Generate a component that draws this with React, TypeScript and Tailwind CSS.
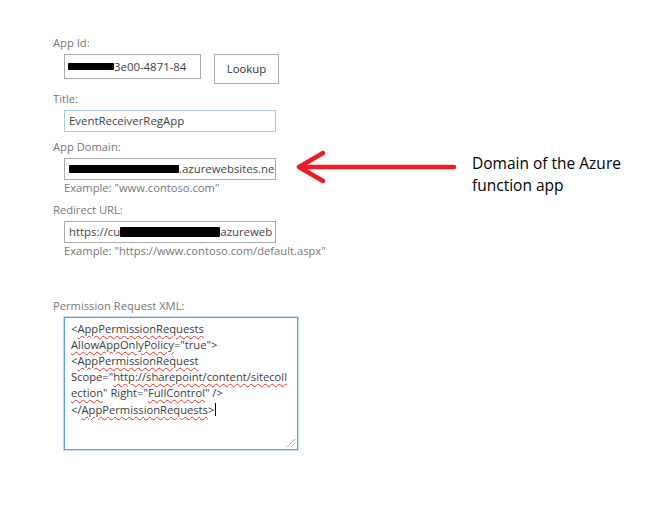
import React from 'react';

const Squig = ({ children }: { children: React.ReactNode }) => (
  <span className="underline decoration-wavy decoration-[#e0302a] decoration-1 underline-offset-[2px]">{children}</span>
);

const Label = ({ children }: { children: React.ReactNode }) => (
  <div className="text-[11.2px] leading-[18px] text-[#777777]">{children}</div>
);

const Hint = ({ children }: { children: React.ReactNode }) => (
  <div className="ml-[11px] text-[11.2px] leading-[16px] text-[#777777]">{children}</div>
);

const Box = ({ children, blue }: { children: React.ReactNode; blue?: boolean }) => (
  <div
    className={`ml-[11px] flex h-[22px] w-[212px] items-center overflow-hidden whitespace-nowrap border pl-[4px] text-[11.4px] text-[#444444] ${
      blue ? 'border-[#a8c8e8]' : 'border-[#ababab]'
    }`}
  >
    {children}
  </div>
);

const Redact = ({ w, h }: { w: string; h: string }) => (
  <span className={`inline-block shrink-0 rounded-[1px] bg-black ${w} ${h}`} />
);

const App = () => {
  return (
    <div
      className="relative h-[514px] w-[645px] bg-white"
      style={{ fontFamily: '"Open Sans", "Noto Sans", sans-serif' }}
    >
      <div className="flex flex-col pl-[53px] pt-[34px]">
        {/* App Id */}
        <Label>App Id:</Label>
        <div className="mt-[2px] flex items-start gap-[13px]">
          <div className="ml-[11px] flex h-[25px] w-[137px] items-center overflow-hidden whitespace-nowrap border border-[#ababab] pl-[3px] text-[11.4px] text-[#444444]">
            <Redact w="w-[46px]" h="h-[7px]" />
            <span>3e00-4871-84</span>
          </div>
          <button className="h-[30px] w-[65px] border border-[#ababab] bg-white text-[11.4px] text-[#333333]">
            Lookup
          </button>
        </div>

        {/* Title */}
        <div className="mt-[6px]">
          <Label>Title:</Label>
        </div>
        <div className="mt-[2px]">
          <Box blue>EventReceiverRegApp</Box>
        </div>

        {/* App Domain */}
        <div className="mt-[6px]">
          <Label>App Domain:</Label>
        </div>
        <div className="mt-[2px]">
          <Box>
            <Redact w="w-[110px]" h="h-[8px]" />
            <span>.azurewebsites.ne</span>
          </Box>
        </div>
        <Hint>Example: "www.contoso.com"</Hint>

        {/* Redirect URL */}
        <div className="mt-[5px]">
          <Label>Redirect URL:</Label>
        </div>
        <div className="mt-[2px]">
          <Box>
            <span>https://cu</span>
            <Redact w="w-[100px]" h="h-[10px]" />
            <span>azureweb</span>
          </Box>
        </div>
        <Hint>Example: "https://www.contoso.com/default.aspx"</Hint>

        {/* Permission Request XML */}
        <div className="mt-[38px]">
          <Label>Permission Request XML:</Label>
        </div>
        <div className="relative ml-[11px] mt-[2px] h-[133px] w-[234px] border border-[#5d9ced] px-[6px] pt-[3px] text-[11.2px] leading-[16px] text-[#3c3c3c] shadow-[0_0_0_1px_#c6dcf6]">
          <div>&lt;<Squig>AppPermissionRequests</Squig></div>
          <div><Squig>AllowAppOnlyPolicy</Squig>="true"&gt;</div>
          <div>&lt;<Squig>AppPermissionRequest</Squig></div>
          <div>Scope="<Squig>http://sharepoint/content/sitecoll</Squig></div>
          <div><Squig>ection</Squig>" Right="<Squig>FullControl</Squig>" /&gt;</div>
          <div>
            &lt;/<Squig>AppPermissionRequests</Squig>&gt;
            <span className="ml-[1px] inline-block h-[13px] w-px translate-y-[2px] bg-black" />
          </div>
          <svg className="absolute bottom-[1px] right-[1px]" width="11" height="11" viewBox="0 0 11 11">
            <path d="M10 2 L2 10 M10 6 L6 10" stroke="#777" strokeWidth="1" strokeDasharray="1 1" />
          </svg>
        </div>
      </div>

      {/* Annotation arrow */}
      <svg className="absolute left-[295px] top-[150px]" width="165" height="36" viewBox="0 0 165 36">
        <g stroke="#ed1c24" strokeWidth="4.5" strokeLinecap="round" strokeLinejoin="round" fill="none">
          <path d="M159 17 L5 17" />
          <path d="M28 3 L4 17 L28 31" />
        </g>
      </svg>
      <div className="absolute left-[472px] top-[152px] text-[15.5px] leading-[22px] text-black">
        <div>Domain of the Azure</div>
        <div>function app</div>
      </div>
    </div>
  );
};

export default App;
